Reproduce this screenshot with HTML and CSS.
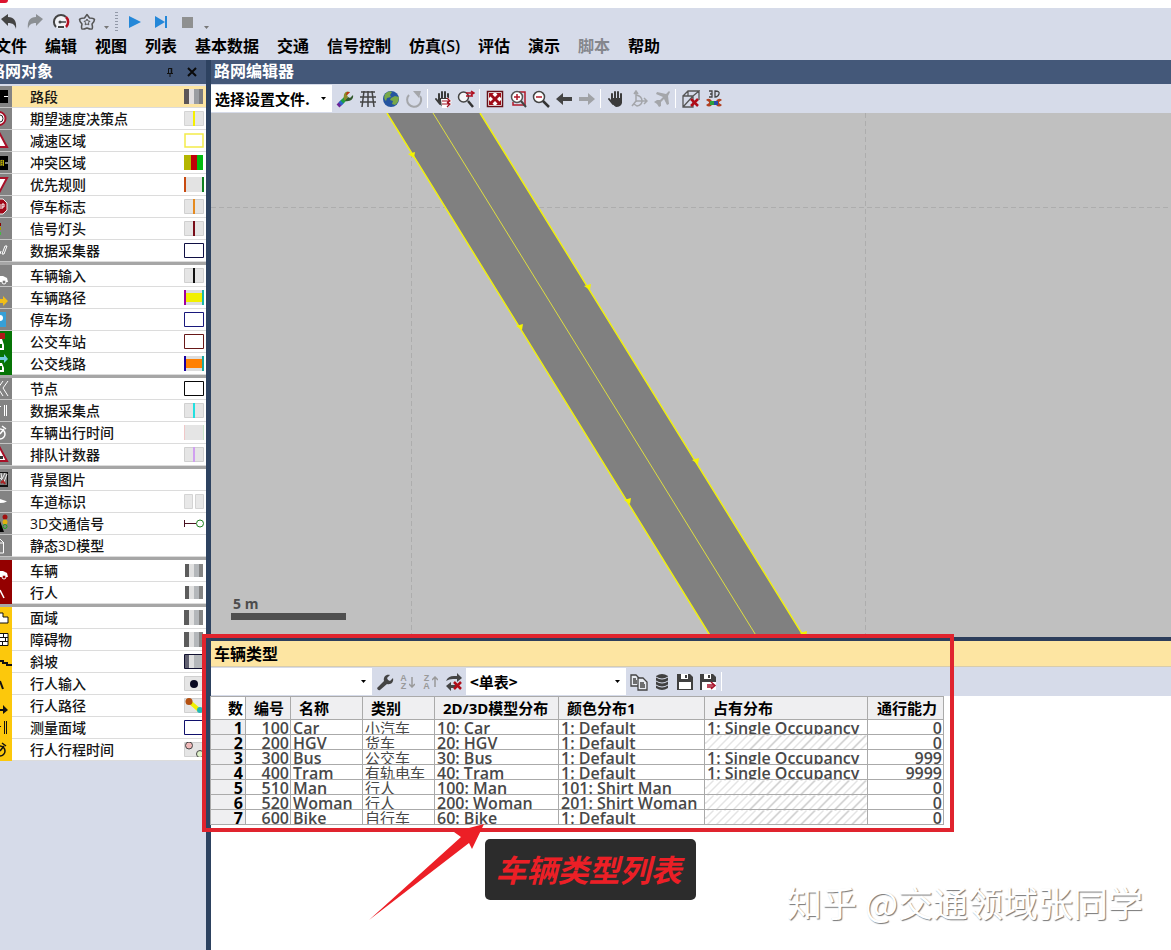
FILE: index.html
```html
<!DOCTYPE html>
<html lang="zh-CN">
<head>
<meta charset="utf-8">
<title>路网编辑器</title>
<link rel="stylesheet" href="styles.css">
</head>
<body>
<div class="app">
  <div class="window-edge"><span class="app-badge"></span></div>
  <header class="top">
    <div class="quickbar">
      <button class="qbtn" aria-label="撤销"><svg width="18" height="18" viewBox="0 0 18 18"><path d="M1 6 8 1v3c6 0 9 4 8 12-1-4-3-6-8-6v3z" fill="#444"/></svg></button>
      <button class="qbtn" aria-label="重做"><svg width="18" height="18" viewBox="0 0 18 18"><path d="M17 6 10 1v3C4 4 1 8 2 16c1-4 3-6 8-6v3z" fill="#8b8f93"/></svg></button>
      <button class="qbtn" aria-label="速度"><svg width="18" height="18" viewBox="0 0 18 18" fill="none"><circle cx="9" cy="9" r="7" fill="#f2f3f7"/><path d="M4 14A7 7 0 1 1 14 4" stroke="#444" stroke-width="2"/><path d="M14 4a7 7 0 0 1 0 10" stroke="#b31020" stroke-width="2.500"/><path d="M8 9h6" stroke="#444" stroke-width="1.500"/><path d="M6 14h6" stroke="#444" stroke-width="2"/><circle cx="8" cy="9" r="1.500" fill="#444"/></svg></button>
      <button class="qbtn" aria-label="收藏"><svg width="18" height="18" viewBox="0 0 18 18" fill="none" stroke="#555" stroke-width="1.500"><path d="M9 1.500 11.500 5q4 0 5 1.500 0 2-2.500 4.500 1 4 0 5-1.500.5-5-1-3.500 1.500-5 1-1-1 0-5Q1.500 8.500 1.500 6.500q1-1.500 5-1.500z" stroke-linejoin="round"/><path d="m9 6 1 2 2 .3-1.500 1.500.3 2L9 11l-1.800.8.3-2L6 8.300 8 8z" stroke-width="1"/></svg></button>
      <button class="overflow" aria-label="更多"><svg width="6" height="4" viewBox="0 0 6 4"><path d="M1 0h5L3.500 3z" fill="#777"/></svg></button>
      <span class="grip"></span>
      <button class="qbtn" aria-label="运行"><svg width="14" height="12" viewBox="0 0 14 12"><path d="M1 0v12l12-6z" fill="#2487d8"/></svg></button>
      <button class="qbtn" aria-label="单步"><svg width="14" height="12" viewBox="0 0 14 12"><path d="M1 0v12l10-6z" fill="#2487d8"/><path d="M11 0h2v12h-2z" fill="#2487d8"/></svg></button>
      <button class="qbtn" aria-label="停止"><svg width="12" height="12" viewBox="0 0 12 12"><path d="M1 1h11v11H1z" fill="#8f9090"/></svg></button>
      <button class="overflow" aria-label="更多"><svg width="6" height="4" viewBox="0 0 6 4"><path d="M1 0h5L3.500 3z" fill="#777"/></svg></button>
    </div>
    <nav class="menu">
      <button>文件</button><button>编辑</button><button>视图</button><button>列表</button><button>基本数据</button><button>交通</button><button>信号控制</button><button>仿真(S)</button><button>评估</button><button>演示</button><button disabled>脚本</button><button>帮助</button>
    </nav>
  </header>

  <div class="work">
    <aside class="sidebar">
      <div class="pane-title side-title"><h2>路网对象</h2>
        <button class="title-btn" aria-label="固定"><svg width="8" height="10" viewBox="0 0 8 10" fill="none" stroke="#111" ><path d="M2.500 6V1.500h3V6M1 6.500h6M4 7v3"/><path d="M5.500 1v5" stroke-width="1.500"/></svg></button>
        <button class="title-btn" aria-label="关闭"><svg width="10" height="10" viewBox="0 0 10 10" stroke="#0a0a0a" stroke-width="2"><path d="m1 1 8 8M9 1 1 9"/></svg></button>
      </div>
      <ul class="group gray">
        <li><button class="item active"><span class="ico"><svg viewBox="0 0 12 21"><path d="M0 4h8v13H0z" fill="#000"/><path d="M4 10.500h4" stroke="#fff"/></svg></span><span class="name">路段</span><svg class="sw" viewBox="0 0 20 15"><path d="M0 0h19v15H0z" fill="#9a9da2"/><path d="M0 0h5v15H0z" fill="#5c5658"/><path d="M5 0h5v15H5z" fill="#e2dfe0"/><path d="M15 0h4v15h-4z" fill="#7c7c80"/></svg></button></li>
        <li><button class="item"><span class="ico"><svg viewBox="0 0 12 21"><circle cx="-1" cy="10.500" r="6.500" fill="#fff" stroke="#a81028" stroke-width="2"/><path d="M0 7q3 0 3 3.500T0 14" fill="none" stroke="#222"/></svg></span><span class="name">期望速度决策点</span><svg class="sw" viewBox="0 0 20 15"><path d="M.5.5h19v14H.5z" fill="#e5e5e5" stroke="#d4d4d4"/><path d="M10 0v15" stroke="#f5f000" stroke-width="2"/></svg></button></li>
        <li><button class="item"><span class="ico"><svg viewBox="0 0 12 21"><path d="M-8 17H7L0 4z" fill="#fff" stroke="#a81028" stroke-width="2"/></svg></span><span class="name">减速区域</span><svg class="sw" viewBox="0 0 20 15"><path d="M1 1h18v13H1z" fill="#fff" stroke="#f3ec4a" stroke-width="1.500"/></svg></button></li>
        <li><button class="item"><span class="ico"><svg viewBox="0 0 12 21"><path d="M0 4h8v14H0z" fill="#000"/><path d="M0 8h4v6H0z" fill="#b8a900"/><path d="M0 9h4M0 11h4M0 13h4M2 7v8" stroke="#222" stroke-dasharray="1 1"/><path d="M5 11h3" stroke="#fff"/></svg></span><span class="name">冲突区域</span><svg class="sw" viewBox="0 0 20 15"><path d="M0 0h7v15H0z" fill="#b5b600"/><path d="M7 0h6v15H7z" fill="#c00008"/><path d="M13 0h6v15h-6z" fill="#00bb10"/></svg></button></li>
        <li><button class="item"><span class="ico"><svg viewBox="0 0 12 21"><path d="M-8 4H7L0 17z" fill="#fff" stroke="#a81028" stroke-width="2"/></svg></span><span class="name">优先规则</span><svg class="sw" viewBox="0 0 20 15"><path d="M0 0h20v15H0z" fill="#e3e3e3"/><path d="M1 0v15" stroke="#c84a10" stroke-width="2"/><path d="M19 0v15" stroke="#108020" stroke-width="2"/></svg></button></li>
        <li><button class="item"><span class="ico"><svg viewBox="0 0 12 21"><path d="M-4 3H3l4 4v7l-4 4h-7z" fill="#a00818" stroke="#eee"/><path d="M0 8v5M2 13V8h2v3H2" fill="none" stroke="#fff"/></svg></span><span class="name">停车标志</span><svg class="sw" viewBox="0 0 20 15"><path d="M.5.5h19v14H.5z" fill="#e5e5e5" stroke="#d0d0d0"/><path d="M10 0v15" stroke="#e58a20" stroke-width="2"/></svg></button></li>
        <li><button class="item"><span class="ico"><svg viewBox="0 0 12 21"><path d="M0 5h1v3H0z" fill="#800"/><path d="M0 9h1v3H0z" fill="#a90"/><path d="M0 14h1v3H0z" fill="#4b4"/></svg></span><span class="name">信号灯头</span><svg class="sw" viewBox="0 0 20 15"><path d="M.5.5h19v14H.5z" fill="#e5e5e5" stroke="#d0d0d0"/><path d="M10 0v15" stroke="#780c18" stroke-width="2"/></svg></button></li>
        <li><button class="item"><span class="ico"><svg viewBox="0 0 12 21"><path d="M0 14 1 11M2 14 5 6h2L4 14z" fill="none" stroke="#fff"/></svg></span><span class="name">数据采集器</span><svg class="sw" viewBox="0 0 20 15"><path d="M.5.500h19v14H.5z" fill="#fff" stroke="#101044"/></svg></button></li>
      </ul>
      <ul class="group gray">
        <li><button class="item"><span class="ico"><svg viewBox="0 0 12 21"><path d="M0 11h3l4 2 1 4H0z" fill="#fff"/><circle cx="4" cy="17" r="2" fill="#777" stroke="#fff"/></svg></span><span class="name">车辆输入</span><svg class="sw" viewBox="0 0 20 15"><path d="M.5.500h19v14H.5z" fill="#e5e5e5" stroke="#d0d0d0"/><path d="M10 0v15" stroke="#111" stroke-width="2"/></svg></button></li>
        <li><button class="item"><span class="ico"><svg viewBox="0 0 12 21"><path d="M0 12h3V9l5 5-5 5v-3H0z" fill="#f0be18"/></svg></span><span class="name">车辆路径</span><svg class="sw" viewBox="0 0 20 15"><path d="M0 0h20v15H0z" fill="#ddd"/><path d="M2 3h16v9H2z" fill="#f2f000"/><path d="M1 0v15" stroke="#a000a0" stroke-width="2"/><path d="M19 0v15" stroke="#18b8a8" stroke-width="2"/></svg></button></li>
        <li><button class="item"><span class="ico"><svg viewBox="0 0 12 21"><path d="M0 3h6v15H0z" fill="#36a0d8"/><circle cx="0" cy="9" r="3" fill="#fff"/></svg></span><span class="name">停车场</span><svg class="sw" viewBox="0 0 20 15"><path d="M.5.500h19v14H.5z" fill="#fff" stroke="#18187c"/></svg></button></li>
        <li class="green"><button class="item"><span class="ico"><svg viewBox="0 0 12 21"><path d="M0 2h5v6H0z" fill="#b01818"/><path d="M0 8h2l2 6v5H0z" fill="#fff"/><path d="M0 13h2v4H0z" fill="#067406"/></svg></span><span class="name">公交车站</span><svg class="sw" viewBox="0 0 20 15"><path d="M.5.500h19v14H.5z" fill="#fff" stroke="#681818"/></svg></button></li>
        <li class="green"><button class="item"><span class="ico"><svg viewBox="0 0 12 21"><path d="M0 4h4V1l4 5-4 4V7H0z" fill="#72cde0"/><path d="M0 10h2l2 5v4H0z" fill="#fff"/><path d="M0 13h2v4H0z" fill="#067406"/></svg></span><span class="name">公交线路</span><svg class="sw" viewBox="0 0 20 15"><path d="M0 0h20v15H0z" fill="#ddd"/><path d="M2 3h16v9H2z" fill="#ff7f00"/><path d="M1 0v15" stroke="#1800a0" stroke-width="2"/><path d="M19 0v15" stroke="#18a8a0" stroke-width="2"/></svg></button></li>
      </ul>
      <ul class="group gray">
        <li><button class="item"><span class="ico"><svg viewBox="0 0 12 21"><path d="m3 3-5 7 5 8M8 3l-5 7 5 8" fill="none" stroke="#fff"/></svg></span><span class="name">节点</span><svg class="sw" viewBox="0 0 20 15"><path d="M.5.500h19v14H.5z" fill="#fff" stroke="#080808"/></svg></button></li>
        <li><button class="item"><span class="ico"><svg viewBox="0 0 12 21"><path d="M4.500 5v11M6.500 5v11M0 7l1-1" stroke="#fff"/></svg></span><span class="name">数据采集点</span><svg class="sw" viewBox="0 0 20 15"><path d="M.5.500h19v14H.5z" fill="#e5e5e5" stroke="#d0d0d0"/><path d="M10 0v15" stroke="#20e0e0" stroke-width="2"/></svg></button></li>
        <li><button class="item"><span class="ico"><svg viewBox="0 0 12 21"><circle cx="0" cy="12" r="5" fill="none" stroke="#fff" stroke-width="1.500"/><path d="M0 12 4 7M2 4l4 3" stroke="#fff" stroke-width="1.500"/></svg></span><span class="name">车辆出行时间</span><svg class="sw" viewBox="0 0 20 15"><path d="M0 0h20v15H0z" fill="#e5e5e5"/><path d="M.5 0v15" stroke="#f0c8c8"/><path d="M19.500 0v15" stroke="#c8e4c8"/></svg></button></li>
        <li><button class="item"><span class="ico"><svg viewBox="0 0 12 21"><path d="M-8 17H7L0 4z" fill="#fff" stroke="#a81028" stroke-width="2"/><path d="M0 12h3v3H0z" fill="#333"/></svg></span><span class="name">排队计数器</span><svg class="sw" viewBox="0 0 20 15"><path d="M.5.500h19v14H.5z" fill="#e5e5e5" stroke="#d0d0d0"/><path d="M10 0v15" stroke="#d0a0f0" stroke-width="2"/></svg></button></li>
      </ul>
      <ul class="group gray">
        <li><button class="item"><span class="ico"><svg viewBox="0 0 12 21"><path d="M0 3h8v15H0z" fill="#111"/><path d="M0 4h7v12H0z" fill="#777"/><path d="m1 4 1 6 3-6M0 9l4 4 3-8" fill="none" stroke="#eee"/><path d="m1 14 2-2 2 3" fill="none" stroke="#a22" stroke-width="2"/></svg></span><span class="name">背景图片</span></button></li>
        <li><button class="item"><span class="ico"><svg viewBox="0 0 12 21"><path d="M0 8q4 1 7 2.500Q4 12 0 12z" fill="#fff"/></svg></span><span class="name">车道标识</span><svg class="sw" viewBox="0 0 20 15"><path d="M.5.500h8v14h-8zM11.500.5h8v14h-8z" fill="#e8e8e8" stroke="#d4d4d4"/></svg></button></li>
        <li><button class="item"><span class="ico"><svg viewBox="0 0 12 21"><path d="m0 8 4 11H0z" fill="#000"/><circle cx="5" cy="4" r="2.500" fill="#a01010"/><circle cx="5" cy="9" r="2.500" fill="#e0b010"/><circle cx="5" cy="13.500" r="2" fill="none" stroke="#20a020"/></svg></span><span class="name light">3D交通信号</span><svg class="sw" viewBox="0 0 20 15"><path d="M.5 4v7M.5 7.500H12" stroke="#481020"/><circle cx="16" cy="7.500" r="3.500" fill="#fff" stroke="#208020"/></svg></button></li>
        <li><button class="item"><span class="ico"><svg viewBox="0 0 12 21"><path d="M0 8h3.500v10H0M0 4l4 4" fill="none" stroke="#fff"/></svg></span><span class="name light">静态3D模型</span></button></li>
      </ul>
      <ul class="group red">
        <li><button class="item"><span class="ico"><svg viewBox="0 0 12 21"><path d="M0 11h3l4 2 1 4H0z" fill="#fff"/><circle cx="4" cy="17" r="2" fill="#900" stroke="#fff"/></svg></span><span class="name">车辆</span><svg class="sw" viewBox="0 0 20 15"><path d="M1 1h18v13H1z" fill="#b4b7ba"/><path d="M1 1h4v13H1z" fill="#5c5c5c"/><path d="M5 1h5v13H5z" fill="#e0e0e0"/><path d="M15 1h4v13h-4z" fill="#848484"/></svg></button></li>
        <li><button class="item"><span class="ico"><svg viewBox="0 0 12 21"><path d="m0 8 4 8" stroke="#fff" stroke-width="1.500"/></svg></span><span class="name">行人</span><svg class="sw" viewBox="0 0 20 15"><path d="M1 1h18v13H1z" fill="#b4b7ba"/><path d="M1 1h4v13H1z" fill="#5c5c5c"/><path d="M5 1h5v13H5z" fill="#e0e0e0"/><path d="M15 1h4v13h-4z" fill="#848484"/></svg></button></li>
      </ul>
      <ul class="group amber">
        <li><button class="item"><span class="ico"><svg viewBox="0 0 12 21"><path d="M-1 6h4v4h5v6h-9z" fill="#fff" stroke="#111"/></svg></span><span class="name">面域</span><svg class="sw" viewBox="0 0 20 15"><path d="M0 0h19v15H0z" fill="#b4b7ba"/><path d="M0 0h5v15H0z" fill="#5c5c5c"/><path d="M5 0h5v15H5z" fill="#e0e0e0"/><path d="M15 0h4v15h-4z" fill="#848484"/></svg></button></li>
        <li><button class="item"><span class="ico"><svg viewBox="0 0 12 21"><path d="M-1 4.500h9v12h-9z" fill="#fff" stroke="#111"/><path d="M0 8.500h8M0 12.500h8M3.500 4v4M5.500 8v4M2.500 12v4" stroke="#111"/></svg></span><span class="name">障碍物</span><svg class="sw" viewBox="0 0 20 15"><path d="M0 0h19v15H0z" fill="#b4b7ba"/><path d="M0 0h5v15H0z" fill="#5c5c5c"/><path d="M5 0h5v15H5z" fill="#e0e0e0"/><path d="M15 0h4v15h-4z" fill="#848484"/></svg></button></li>
        <li><button class="item"><span class="ico"><svg viewBox="0 0 12 21"><path d="M0 10h3v2h4v2h5" fill="none" stroke="#111" stroke-width="2"/></svg></span><span class="name">斜坡</span><svg class="sw" viewBox="0 0 20 15"><path d="M.5.500h19v14H.5z" fill="#b4b7ba" stroke="#101030"/><path d="M1 1h4v13H1z" fill="#606070"/><path d="M5 1h5v13H5z" fill="#e0e0e0"/></svg></button></li>
        <li><button class="item"><span class="ico"><svg viewBox="0 0 12 21"><path d="m0 8 3 8" stroke="#111" stroke-width="2"/></svg></span><span class="name">行人输入</span><svg class="sw" viewBox="0 0 20 15"><path d="M.5.500h19v14H.5z" fill="#e5e5e5" stroke="#d0d0d0"/><circle cx="10" cy="8" r="4" fill="#080820"/></svg></button></li>
        <li><button class="item"><span class="ico"><svg viewBox="0 0 12 21"><path d="M0 14h3v-4l5 5-5 4v-3H0z" fill="#111"/></svg></span><span class="name">行人路径</span><svg class="sw" viewBox="0 0 20 15"><path d="M.5.500h19v14H.5z" fill="#e5e5e5" stroke="#d0d0d0"/><path d="m7 5 8 7" stroke="#f0f000" stroke-width="4"/><circle cx="5" cy="3.500" r="3.500" fill="#b45010"/><circle cx="16" cy="12" r="3" fill="#20b8b8"/></svg></button></li>
        <li><button class="item"><span class="ico"><svg viewBox="0 0 12 21"><path d="M4.500 4v13M6.500 4v13M0 10l1-1" stroke="#111"/></svg></span><span class="name">测量面域</span><svg class="sw" viewBox="0 0 20 15"><path d="M.5.500h19v14H.5z" fill="#fff" stroke="#10106c"/></svg></button></li>
        <li><button class="item"><span class="ico"><svg viewBox="0 0 12 21"><circle cx="0" cy="12" r="5" fill="none" stroke="#111" stroke-width="1.500"/><path d="M0 12 4 7M2 4l4 3" stroke="#111" stroke-width="1.500"/></svg></span><span class="name">行人行程时间</span><svg class="sw" viewBox="0 0 20 15"><path d="M.5.500h19v14H.5z" fill="#e5e5e5" stroke="#d0d0d0"/><circle cx="5" cy="3.500" r="3.500" fill="#f0b8b8" stroke="#444"/><circle cx="16" cy="12" r="3.500" fill="#ddf0c8" stroke="#444"/></svg></button></li>
      </ul>
    </aside>

    <main class="content">
      <section class="editor">
        <div class="pane-title"><h2>路网编辑器</h2></div>
        <div class="toolbar">
          <span class="combo layout"><select aria-label="选择设置文件"><option>选择设置文件.</option></select><svg width="6" height="4" viewBox="0 0 6 4"><path d="M0 0h5L2.500 3z"/></svg></span>
          <button class="tool" aria-label="设置"><svg viewBox="0 0 18 18" stroke-width="4"><path d="m2 16 4-4" stroke="#6c2598"/><path d="m4 14 3-3" stroke="#2868c8"/><path d="m6 12 4-4" stroke="#20a040"/><path d="M8 9C7 3 10 0 14 2l-3 3 1 2-3 4z" fill="#8a8a28" stroke="none"/><path d="m10 5 1-3 3 0-3 3z" fill="#c03010" stroke="none"/><path d="m9 11 3-4 2 1 3-3c1 4-3 7-8 6z" fill="#30582c" stroke="none"/></svg></button>
          <button class="tool" aria-label="网格"><svg viewBox="0 0 18 18" fill="none" stroke="#444" stroke-width="1.500"><path d="M2 2h14M1 7h16M1 12h16M5 1 3 17M9 1v16M13 1l2 16"/></svg></button>
          <button class="tool" aria-label="地图"><svg viewBox="0 0 18 18"><circle cx="9" cy="9" r="8" fill="#2454a0"/><path d="M3 4q4-4 7-2l-2 3 1 2-4 1-1 3q-3-2-1-7zM9 8l4-2 4 1q0 5-4 8l-3-1 1-3-3-1z" fill="#78a848"/></svg></button>
          <button class="tool" aria-label="刷新"><svg viewBox="0 0 18 18"><path d="M4 5a7 7 0 1 0 11 1" fill="none" stroke="#a4a6aa" stroke-width="2"/><path d="m8 1 8 0-2 7z" fill="#a4a6aa"/></svg></button>
          <span class="sep"></span>
          <button class="tool" aria-label="同步平移"><svg viewBox="0 0 18 18"><path d="M5 10V4M8 9V2M11 9V2M14 9V4M2 9l4 5" fill="none" stroke="#3b3b3b" stroke-width="2" stroke-linecap="round"/><path d="M4 8h11v5q-1 4-6 4Q5 15 4 9z" fill="#3b3b3b"/><path d="M7 9h6V7l5 4-2 2 2 1-5 4H8z" fill="#fff"/><path d="M8 11h8m-3-3 3 3-3 2M8 14h8m-3-2 3 2-3 3" stroke="#a01020" fill="none" stroke-width="1.200"/></svg></button>
          <button class="tool" aria-label="同步缩放"><svg viewBox="0 0 18 18" fill="none"><circle cx="6.500" cy="7" r="5" fill="#f4f5f8" stroke="#444" stroke-width="1.500"/><path d="m11 11 5 6" stroke="#333" stroke-width="2.500"/><path d="M9 3h7m-2-2 3 2-3 2M9 6h7" stroke="#b01020" stroke-width="1.500"/></svg></button>
          <span class="sep"></span>
          <button class="tool" aria-label="显示全部"><svg viewBox="0 0 18 18"><path d="M1.500 1.500h15v15h-15z" fill="#fff" stroke="#651018" stroke-width="1.500"/><path d="M3 3h5L6.500 4.500 9 7l2.500-2.500L10 3h5v5l-1.500-1.500L11 9l2.500 2.500L15 10v5h-5l1.500-1.500L9 11l-2.500 2.500L8 15H3v-5l1.500 1.500L7 9 4.500 6.500 3 8z" fill="#a00c18"/></svg></button>
          <button class="tool" aria-label="放大"><svg viewBox="0 0 18 18" fill="none"><path d="M10 2h6v13H4v-3" stroke="#b01828" stroke-width="1.500"/><circle cx="8" cy="7" r="5.500" fill="#fff" stroke="#555" stroke-width="1.500"/><path d="M5 7h6M8 4v6" stroke="#b01828" stroke-width="1.500"/><path d="m12 11 5 6" stroke="#444" stroke-width="2"/></svg></button>
          <button class="tool" aria-label="缩小"><svg viewBox="0 0 18 18" fill="none"><circle cx="7" cy="7" r="5.500" fill="#fff" stroke="#444" stroke-width="1.500"/><path d="M4 7h6" stroke="#b01828" stroke-width="1.500"/><path d="m11 11 6 6" stroke="#333" stroke-width="2.500"/></svg></button>
          <button class="tool" aria-label="后退"><svg viewBox="0 0 18 18"><path d="m1 9 7-6v4h9v4H8v4z" fill="#444"/></svg></button>
          <button class="tool" aria-label="前进"><svg viewBox="0 0 18 18"><path d="m17 9-7-6v4H1v4h9v4z" fill="#a0a2a6"/></svg></button>
          <span class="sep"></span>
          <button class="tool" aria-label="平移"><svg viewBox="0 0 18 18"><path d="M5 10V4M8 9V2M11 9V2M14 9V4M2 9l4 5" fill="none" stroke="#3b3b3b" stroke-width="2" stroke-linecap="round"/><path d="M4 8h11v5q-1 4-6 4Q5 15 4 9z" fill="#3b3b3b"/></svg></button>
          <button class="tool" aria-label="旋转"><svg viewBox="0 0 18 18" fill="none" stroke="#a4a6aa" stroke-width="1.500"><path d="M6 12V1M4 4l2-3 2 3M2 16l4-5h11M14 8l3 3-3 3"/><path d="M6 5q6 1 6 6 0 4-5 5l-3-2"/></svg></button>
          <button class="tool" aria-label="飞行"><svg viewBox="0 0 18 18"><path d="m1 12 3-2 3 0 3-3-7-3 1-2 9 2 3-3 1 1-2 4 1 8-2 1-3-6-3 3 0 4-2 1-2-3z" fill="#a4a6aa"/></svg></button>
          <span class="sep"></span>
          <button class="tool" aria-label="线框"><svg viewBox="0 0 18 18" fill="none" stroke-width="1.300"><path d="M1 6h10v11H1zM1 6l5-5h11l-6 5M17 1v9M1 17 11 6M6 1v5" stroke="#555"/><path d="m9 9 7 7m0-7-7 7" stroke="#b00c18" stroke-width="2.500"/></svg></button>
          <button class="tool" aria-label="3D模式"><svg viewBox="0 0 18 18"><path d="M4 1h3v6H4M5 4h2M10 1q5 0 4 3t-4 3z" fill="none" stroke="#444" stroke-width="1.300"/><path d="M1 10q3-3 6 1h4q3-4 6-1l-3 2v1l3 2q-3 3-6 0H7q-3 3-6 0l3-2v-1z" fill="#b04020"/><path d="M5 11h4v4H5z" fill="#2ca03c"/><path d="M9 11h4v4H9z" fill="#284aa8"/></svg></button>
        </div>
        <div class="map">
          <svg class="network" viewBox="0 0 960 524" preserveAspectRatio="xMinYMin slice">
            <path d="M200.500 0v524M654.500 0v524M0 94.500h960" fill="none" stroke="#adadad" stroke-dasharray="5 3"/>
            <path d="M176 0h93l324 524h-93z" fill="#808080"/>
            <path d="m222 0 324 524" stroke="#dede40"/>
            <path d="m176 0 324 524M269 0l324 524" stroke="#f0f010" stroke-width="1.500"/>
            <path d="m197 41 7-2-1 6zM305 213l7-2-1 6zM413 387l7-2-1 6zM373 173l7-2-1 6zM481 347l7-2-1 6zM589 520l7-2-1 6z" fill="#f4f400"/>
          </svg>
          <div class="scale"><span>5 m</span><i></i></div>
        </div>
      </section>

      <section class="list">
        <h2 class="list-title">车辆类型</h2>
        <div class="toolbar list-tools">
          <span class="combo filter"><select aria-label="布局"><option></option></select><svg width="6" height="4" viewBox="0 0 6 4"><path d="M0 0h5L2.500 3z"/></svg></span>
          <button class="tool" aria-label="属性"><svg viewBox="0 0 18 18"><path d="m1 15 7-7C7 4 10 1 14 2l-3 3 1 2 2 1 3-3c1 4-2 7-6 6l-7 6q-2 1-3-2z" fill="#444"/></svg></button>
          <button class="tool sort" aria-label="升序"><span>A<br>Z</span><svg viewBox="0 0 6 12"><path d="M3 1v10M0 8l3 3 3-3" fill="none" stroke="#999" stroke-width="1.500"/></svg></button>
          <button class="tool sort" aria-label="降序"><span>Z<br>A</span><svg viewBox="0 0 6 12"><path d="M3 11V1M0 4l3-3 3 3" fill="none" stroke="#999" stroke-width="1.500"/></svg></button>
          <button class="tool" aria-label="取消同步"><svg viewBox="0 0 18 18"><path d="M1 8q2-5 8-5h3V0l5 5-5 4V6H8q-4 0-7 2zM16 10q-3 5-8 5H6v3l-5-5 5-4v3h3q4 0 7-2z" fill="#444"/><path d="m9 9 7 7m0-7-7 7" stroke="#b00c18" stroke-width="2.500"/></svg></button>
          <span class="combo relation"><select aria-label="关联列表"><option>&lt;单表&gt;</option></select><svg width="6" height="4" viewBox="0 0 6 4"><path d="M0 0h5L2.500 3z"/></svg></span>
          <button class="tool" aria-label="复制"><svg viewBox="0 0 18 18" fill="#e9ecf2" stroke="#444" stroke-width="1.300"><path d="M1 2h5l3 3v8H1z"/><path d="M8 5h5l4 4v8H8z"/><path d="M3 6h3M3 8h4M3 10h4M10 10h4M10 12h5M10 14h5"/></svg></button>
          <button class="tool" aria-label="数据库"><svg viewBox="0 0 18 18"><path d="M3 3q6-4 12 0v12q-6 4-12 0z" fill="#404040"/><path d="M3 4q6 4 12 0M3 8q6 4 12 0M3 12q6 4 12 0" fill="none" stroke="#d6dbe9"/></svg></button>
          <button class="tool" aria-label="保存"><svg viewBox="0 0 18 18"><path d="M1 1h13l3 3v13H1z" fill="#404040"/><path d="M5 1h7v5H5zM3 9h12v7H3z" fill="#fff"/><path d="M9 2h2v3H9z" fill="#404040"/></svg></button>
          <button class="tool" aria-label="导出"><svg viewBox="0 0 18 18"><path d="M1 1h13l3 3v13H1z" fill="#404040"/><path d="M5 1h7v5H5zM3 9h14v8H3z" fill="#fff"/><path d="M9 2h2v3H9z" fill="#404040"/><path d="M8 12h7m-3-3 4 3.500-4 3.500M8 14h7" fill="none" stroke="#a81028" stroke-width="1.500"/></svg></button>
          <span class="sep"></span>
        </div>
        <table>
          <colgroup><col class="c-row"><col class="c-no"><col class="c-name"><col class="c-cat"><col class="c-model"><col class="c-color"><col class="c-occ"><col class="c-cap"></colgroup>
          <thead><tr><th class="num corner">数</th><th class="num">编号</th><th>名称</th><th>类别</th><th>2D/3D模型分布</th><th>颜色分布1</th><th>占有分布</th><th class="num">通行能力</th></tr></thead>
          <tbody>
            <tr><th><div>1</div></th><td class="num"><div>100</div></td><td><div>Car</div></td><td class="zh"><div>小汽车</div></td><td><div>10: Car</div></td><td><div>1: Default</div></td><td><div>1: Single Occupancy</div></td><td class="num"><div>0</div></td></tr>
            <tr><th><div>2</div></th><td class="num"><div>200</div></td><td><div>HGV</div></td><td class="zh"><div>货车</div></td><td><div>20: HGV</div></td><td><div>1: Default</div></td><td class="none"></td><td class="num"><div>0</div></td></tr>
            <tr><th><div>3</div></th><td class="num"><div>300</div></td><td><div>Bus</div></td><td class="zh"><div>公交车</div></td><td><div>30: Bus</div></td><td><div>1: Default</div></td><td><div>1: Single Occupancy</div></td><td class="num"><div>999</div></td></tr>
            <tr><th><div>4</div></th><td class="num"><div>400</div></td><td><div>Tram</div></td><td class="zh"><div>有轨电车</div></td><td><div>40: Tram</div></td><td><div>1: Default</div></td><td><div>1: Single Occupancy</div></td><td class="num"><div>9999</div></td></tr>
            <tr><th><div>5</div></th><td class="num"><div>510</div></td><td><div>Man</div></td><td class="zh"><div>行人</div></td><td><div>100: Man</div></td><td><div>101: Shirt Man</div></td><td class="none"></td><td class="num"><div>0</div></td></tr>
            <tr><th><div>6</div></th><td class="num"><div>520</div></td><td><div>Woman</div></td><td class="zh"><div>行人</div></td><td><div>200: Woman</div></td><td><div>201: Shirt Woman</div></td><td class="none"></td><td class="num"><div>0</div></td></tr>
            <tr><th><div>7</div></th><td class="num"><div>600</div></td><td><div>Bike</div></td><td class="zh"><div>自行车</div></td><td><div>60: Bike</div></td><td><div>1: Default</div></td><td class="none"></td><td class="num"><div>0</div></td></tr>
          </tbody>
        </table>
        <div class="callout-box"></div>
        <svg class="callout-arrow" width="116" height="98" viewBox="0 0 116 98"><path d="M0 97 92 14l-7-5 30-8-12 25-3-6z" fill="#ec1f26"/></svg>
        <div class="callout-label">车辆类型列表</div>
        <div class="watermark">知乎 @交通领域张同学</div>
      </section>
    </main>
  </div>
</div>
</body>
</html>
```
FILE: styles.css
```css
* { box-sizing: border-box; }
body { margin: 0; font-family: "Noto Sans", "Noto Sans CJK SC", sans-serif; color: #000; background: #fff; }
button, select { font: inherit; color: inherit; border: 0; padding: 0; margin: 0; background: none; }
h2 { margin: 0; font-size: 16px; }
ul { list-style: none; margin: 0; padding: 0; }
svg { display: block; flex: none; }

.app { height: 100vh; min-height: 860px; display: flex; flex-direction: column; overflow: hidden; }
.window-edge { height: 8px; flex: none; }
.app-badge { display: block; width: 8px; height: 3px; background: #dc1430; border-radius: 0 0 3px 0; }

.top { background: #d6dbe9; flex: none; }
.quickbar { height: 27px; display: flex; align-items: center; margin-left: -4px; }
.qbtn { width: 26px; height: 26px; display: grid; place-items: center; }
.overflow { width: 12px; height: 16px; display: grid; place-items: end center; }
.grip { width: 3px; height: 19px; margin: 0 4px 0 3px; background: repeating-linear-gradient(#9299a8 0 1px, transparent 1px 3px); }
.menu { display: flex; gap: 18px; height: 25px; align-items: flex-start; margin-left: -5px; font-family: "Open Sans", "Noto Sans CJK SC", sans-serif; font-size: 16px; font-weight: 600; line-height: 22px; white-space: nowrap; }
.menu button:disabled { color: #85878d; }

.work { flex: 1; min-height: 0; display: flex; }
.sidebar { width: 211px; flex: none; border-right: 5px solid #2d4260; background: #d6dbe9; }
.content { flex: 1; min-width: 0; display: flex; flex-direction: column; }

.pane-title { height: 24px; display: flex; align-items: center; padding-left: 3px; background: #445879; color: #fff; font-family: "Noto Sans CJK SC", sans-serif; line-height: 20px; }
.pane-title h2 { height: 24px; }
.side-title { margin-bottom: 2px; padding: 0 9px 0 0; }
.side-title h2 { margin: 0 auto 0 -11px; }
.title-btn { margin-left: 13px; }

.group { border-top: 3px solid #a6a6a6; }
.side-title + .group { border-top: 0; }
.item { width: 100%; height: 22px; display: flex; align-items: stretch; text-align: left; background: #fff; font-family: "Noto Sans CJK SC", sans-serif; font-size: 14px; font-weight: 500; color: #151515; }
.item .name { flex: 1; padding-left: 18px; line-height: 21px; border-bottom: 1px solid #dcdcdc; }
.item .light { font-family: "Open Sans", "Noto Sans CJK SC", sans-serif; }
.item .sw { width: 22px; height: 22px; padding: 3px 2px 3px 0; border-bottom: 1px solid #dcdcdc; }
.item.active { background: #fde5a2; }
.ico { width: 12px; height: 22px; border-bottom: 1px solid #c4c4c4; background: #838383; overflow: hidden; }
.ico svg { width: 12px; height: 21px; }
.green .ico { background: #067406; border-color: #067406; }
.red .ico { background: #940000; border-color: #940000; }
.amber .ico { background: #fcc80c; border-color: #fcc80c; }

.editor { flex: 577 1 0; min-height: 0; display: flex; flex-direction: column; }
.toolbar { height: 29px; flex: none; display: flex; align-items: center; background: #d6dbe9; font-family: "Noto Sans CJK SC", sans-serif; font-size: 15px; font-weight: 700; }
.combo { display: grid; align-items: center; height: 27px; background: #fff; margin-right: 1px; }
.combo select, .combo svg { grid-area: 1 / 1; }
.combo select { appearance: none; height: 27px; padding: 0 20px 0 4px; width: 100%; }
.combo svg { justify-self: end; margin-right: 5px; pointer-events: none; }
.layout { width: 121px; }
.filter { width: 161px; }
.relation { width: 160px; margin-left: 1px; }
.tool { width: 23px; height: 23px; flex: none; display: grid; place-items: center; }
.tool svg { width: 18px; height: 18px; }
.sep { width: 1px; height: 19px; margin: 0 3px 0 2px; background: #fff; }
.sort { display: flex; align-items: center; justify-content: center; gap: 2px; font-family: "Liberation Sans", sans-serif; font-size: 9px; line-height: 8px; font-weight: 700; color: #999; }
.sort svg { width: 6px; height: 12px; }

.map { flex: 1; min-height: 0; position: relative; background: #c0c0c0; }
.network { width: 100%; height: 100%; }
.scale { position: absolute; left: 20px; bottom: 17px; width: 115px; font-family: "Open Sans", sans-serif; font-size: 14px; font-weight: 700; line-height: 19px; color: #4c4c4c; }
.scale span { padding-left: 2px; }
.scale i { display: block; height: 7px; background: #4f4f4f; }

.list { flex: 309 1 0; min-height: 0; position: relative; border-top: 4px solid #2d3e5c; background: #fff; }
.list-title { height: 26px; padding-left: 3px; background: #fde5a2; border-bottom: 1px solid #d8ccac; font-family: "Noto Sans CJK SC", sans-serif; line-height: 24px; }

table { width: 733px; margin-left: -1px; table-layout: fixed; border-collapse: collapse; color: #484848; font-family: "Open Sans", "Noto Sans CJK SC", sans-serif; font-size: 16px; font-weight: 600; }
.c-row { width: 35px; } .c-no { width: 45px; } .c-name, .c-cat { width: 72px; } .c-model { width: 124px; } .c-color { width: 146px; } .c-occ { width: 163px; } .c-cap { width: 76px; }
th, td { padding: 0; border: 1px solid #aaa; text-align: left; white-space: nowrap; }
thead th { height: 23px; padding: 0 8px; background: #efeff1; color: #000; font-family: "Noto Sans", "Noto Sans CJK SC", sans-serif; font-size: 15px; line-height: 22px; }
thead .num { padding: 0 6px 0 0; }
thead .corner { background: #fff; padding-right: 2px; }
tbody div { height: 14px; overflow: hidden; padding: 0 2px; line-height: 17px; }
tbody th { background: #efeff1; color: #000; text-align: right; }
.num { text-align: right; }
.num div { padding-right: 1px; }
.zh { font-size: 15px; font-weight: 400; }
.none { background: repeating-linear-gradient(135deg, #fff 0 5px, #c8c8c8 5px 6px); }

.callout-box { position: absolute; left: -9px; top: -7px; width: 752px; height: 198px; border: 4px solid #e0242e; }
.callout-arrow { position: absolute; left: 158px; top: 182px; }
.callout-label { position: absolute; left: 274px; top: 198px; width: 211px; height: 61px; border-radius: 5px; background: #2c2c2c; color: #ec1f26; font-family: "Noto Sans CJK SC", sans-serif; font-size: 31px; font-weight: 700; font-style: italic; line-height: 60px; padding-right: 4px; text-align: center; white-space: nowrap; }
.watermark { position: absolute; right: 28px; bottom: 24px; color: #fff; font-family: "Noto Sans CJK SC", sans-serif; font-size: 35px; line-height: 48px; text-shadow: 1px 1px 1px #777; white-space: nowrap; }
```
